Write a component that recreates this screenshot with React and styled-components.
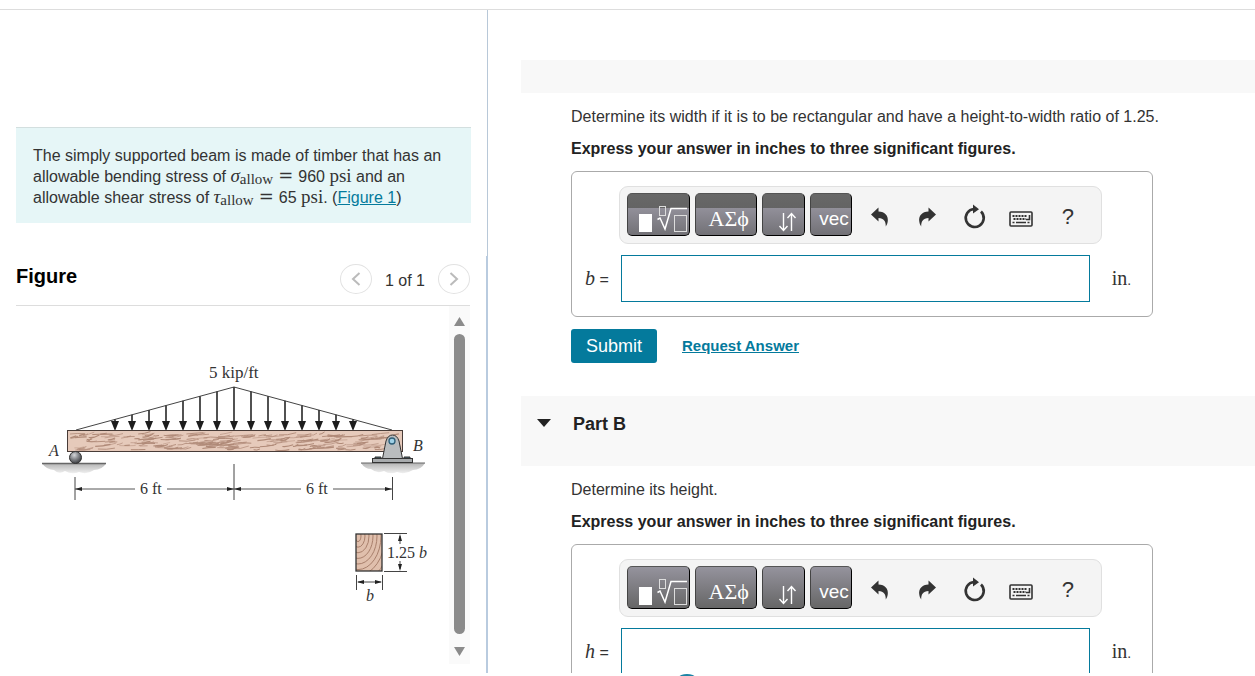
import React from "react";
import styled, { createGlobalStyle, css } from "styled-components";

// Small seeded generator so the wood grain is the same on every render
function makeGrain(count, width, height) {
  let seed = 4211;
  const next = () => {
    seed = (seed * 16807) % 2147483647;
    return seed / 2147483647;
  };
  const strokes = [];
  for (let i = 0; i < count; i++) {
    const len = 5 + next() * 13;
    const x = next() * (width - len);
    const y = 3 + next() * (height - 4);
    const rise = -next() * 2.5;
    const bend = next() * 3 - 1.5;
    strokes.push({
      d: `M${x.toFixed(1)} ${y.toFixed(1)}q${(len / 2).toFixed(1)} ${bend.toFixed(1)} ${len.toFixed(1)} ${rise.toFixed(1)}`,
      w: (0.5 + next() * 0.8).toFixed(1),
    });
  }
  return strokes;
}

const grain = makeGrain(230, 334, 20);

const loads = [-119, -102, -85, -68, -51, -34, -17, 0, 17, 34, 51, 68, 85, 102, 119];

function Dimension({ x1, x2, y, from, to }) {
  return (
    <g stroke="#555" fill="#222" strokeWidth="1">
      <path d={`M${x1} ${y}H${from}M${to} ${y}H${x2}`} fill="none" />
      <path d={`M${x1} ${y}l7 -2v4zM${x2} ${y}l-7 -2v4z`} stroke="none" />
    </g>
  );
}

function BeamFigure() {
  return (
    <Drawing viewBox="16 306 433 356" role="img" aria-label="Simply supported beam with triangular load">
      <defs>
        <radialGradient id="ball" cx="0.4" cy="0.3" r="0.7">
          <stop offset="0" stopColor="#d5d7da" />
          <stop offset="0.5" stopColor="#85878b" />
          <stop offset="1" stopColor="#3c3e42" />
        </radialGradient>
        <linearGradient id="soil" x1="0" y1="0" x2="0" y2="1">
          <stop offset="0" stopColor="#b5b5b5" />
          <stop offset="1" stopColor="#f0f0f0" />
        </linearGradient>
        <clipPath id="section">
          <rect x="356" y="534" width="26" height="37" />
        </clipPath>
      </defs>

      <text x="209" y="378" fontSize="17">5 kip/ft</text>
      <path d="M76 430L234 387L392 430" fill="none" stroke="#444" />
      {loads.map((dx) => {
        const x = 234 + dx;
        const top = 387 + Math.abs(dx) * 0.272;
        return (
          <g key={dx}>
            <path d={`M${x} ${top}V424`} stroke="#333" strokeWidth="1.7" />
            <path d={`M${x - 4} 421h8l-4 10z`} fill="#1d1d1d" />
          </g>
        );
      })}

      <rect x="67.5" y="430.5" width="335" height="21" fill="#e6cabb" />
      <g transform="translate(68 431)" fill="none" stroke="#b08a78">
        {grain.map((s, i) => (
          <path key={i} d={s.d} strokeWidth={s.w} />
        ))}
      </g>
      <rect x="67.5" y="430.5" width="335" height="21" fill="none" stroke="#483c38" />

      <path d="M42 463.5H106Q102 470 94 470Q87 475 79 472Q72 475 65 471Q59 475 54 470Q47 470 42 463.5Z" fill="url(#soil)" />
      <path d="M42 463.5H106" stroke="#666" strokeWidth="1.5" />
      <circle cx="75.5" cy="457.5" r="6" fill="url(#ball)" stroke="#333" />

      <path d="M361 463H425Q421 470 413 470Q405 475 397 472Q390 475 384 471Q377 474 371 469Q365 469 361 463Z" fill="url(#soil)" />
      <path d="M361 463H425" stroke="#666" />
      <path d="M375 459v-2h6v2zM404 459v-2h6v2z" fill="#42606a" stroke="#333" />
      <rect x="372.5" y="458.5" width="40" height="4" fill="#a8abad" stroke="#333" />
      <path d="M382.5 458.5L386 441Q388 435 392.5 435Q397 435 399 441L402.5 458.5Z" fill="#b9bcbe" stroke="#333" />
      <circle cx="392" cy="441" r="3" fill="#9ed0e6" stroke="#2d5f79" strokeWidth="1.3" />

      <text x="49" y="456" fontSize="16" fontStyle="italic">A</text>
      <text x="413" y="451" fontSize="16" fontStyle="italic">B</text>

      <path d="M75 477V500M234 464V500M392.5 477V500" stroke="#444" fill="none" />
      <Dimension x1={75} x2={234} y={489} from={135} to={167} />
      <Dimension x1={234} x2={392} y={489} from={301} to={333} />
      <text x="140" y="494" fontSize="16">6 ft</text>
      <text x="306" y="494" fontSize="16">6 ft</text>

      <rect x="356" y="534" width="26" height="37" fill="#e0bfac" />
      <g clipPath="url(#section)" fill="none" stroke="#a9806c">
        {[4, 8, 12, 16, 20, 24, 28, 33].map((r) => (
          <ellipse key={r} cx="358" cy="536" rx={r - 1} ry={r * 1.4} />
        ))}
      </g>
      <rect x="356" y="534" width="26" height="37" fill="none" stroke="#333" strokeWidth="1.3" />
      <path d="M384 533.5H407M384 571.5H407M400 536V544M400 561V569M356.5 575V590M382.5 575V590M358 582H381" stroke="#444" fill="none" />
      <path d="M400 534l-2 7h4zM400 571l-2 -7h4zM357 582l7 -2v4zM382 582l-7 -2v4z" fill="#222" />
      <text x="387" y="558" fontSize="16">
        1.25 <tspan fontStyle="italic">b</tspan>
      </text>
      <text x="366" y="601" fontSize="16" fontStyle="italic">b</text>
    </Drawing>
  );
}

function TemplatesIcon() {
  return (
    <svg width="61" height="41" viewBox="0 0 61 41" fill="none" stroke="#fff">
      <rect x="11" y="20" width="13" height="18" fill="#fff" stroke="none" />
      <rect x="31.5" y="12.5" width="6" height="9" stroke="#ddd" />
      <path d="M29.5 25.5l2.5 -1.5l5 11l6 -20.5H59" strokeWidth="1.5" />
      <rect x="46.5" y="21.5" width="12" height="16" stroke="#ddd" />
    </svg>
  );
}

function ArrowsIcon() {
  return (
    <svg width="41" height="41" viewBox="0 0 41 41" fill="none" stroke="#fff" strokeWidth="1.4">
      <path d="M20.5 19V36M16.5 32l4 4.5l4 -4.5M28.5 37V19.5M24.5 24l4 -4.5l4 4.5" />
    </svg>
  );
}

function UndoIcon() {
  return (
    <svg width="20" height="22" viewBox="0 0 20 22" fill="#333">
      <path d="M1 8.5L8.5 1.5V5.5C15 5.5 18.5 10 17.8 15C17.5 17.5 16.8 19 15.8 20.5C15.8 15 14 12.5 8.5 12V15.5Z" />
    </svg>
  );
}

function RedoIcon() {
  return (
    <svg width="20" height="22" viewBox="0 0 20 22" fill="#333">
      <path d="M19 8.5L11.5 1.5V5.5C5 5.5 1.5 10 2.2 15C2.5 17.5 3.2 19 4.2 20.5C4.2 15 6 12.5 11.5 12V15.5Z" />
    </svg>
  );
}

function ResetIcon() {
  return (
    <svg width="24" height="26" viewBox="0 0 24 26">
      <path d="M19 7.5A9 9 0 1 1 12 5" fill="none" stroke="#333" strokeWidth="2.6" />
      <path d="M11 0.5L17 5.2L11 9.5Z" fill="#333" />
    </svg>
  );
}

function KeyboardIcon() {
  return (
    <svg width="24" height="20" viewBox="0 -4 24 20" fill="none" stroke="#333">
      <rect x="1" y="1" width="22" height="14" rx="1" strokeWidth="1.6" />
      <path d="M3.5 5H18M4.5 8H17" strokeWidth="2" strokeDasharray="2 1" />
      <path d="M20.5 4V8.5H17M3.5 11.5H5.5M7 11.5H17M18.5 11.5H20.5" strokeWidth="1.6" />
    </svg>
  );
}

function AnswerBox({ id, symbol, striped }) {
  return (
    <AnswerFrame>
      <Toolbar>
        <ToolButton $width={63} $striped={striped} aria-label="Templates">
          <TemplatesIcon />
        </ToolButton>
        <GreekButton $width={62} $striped={striped}>ΑΣϕ</GreekButton>
        <ToolButton $width={43} $striped={striped} aria-label="Subscript and superscript">
          <ArrowsIcon />
        </ToolButton>
        <TextButton $width={42} $striped={striped}>vec</TextButton>
        <IconGroup>
          <IconButton aria-label="Undo"><UndoIcon /></IconButton>
          <IconButton aria-label="Redo"><RedoIcon /></IconButton>
          <IconButton aria-label="Reset"><ResetIcon /></IconButton>
          <IconButton aria-label="Keyboard shortcuts"><KeyboardIcon /></IconButton>
          <IconButton aria-label="Help">?</IconButton>
        </IconGroup>
      </Toolbar>
      <Label htmlFor={id}>
        <i>{symbol}</i> =
      </Label>
      <AnswerInput id={id} type="text" />
      <Unit>
        in<span>.</span>
      </Unit>
    </AnswerFrame>
  );
}

export default function App() {
  return (
    <>
      <GlobalStyles />
      <Page>
        <Sidebar>
          <Intro>
            <Problem>
              The simply supported beam is made of timber that has an allowable bending stress of{" "}
              <Variable>
                <i>σ</i>
                <sub>allow</sub>
              </Variable>
              <Equals>=</Equals>960 <MathText>psi</MathText> and an allowable shear stress of{" "}
              <Variable>
                <i>τ</i>
                <sub>allow</sub>
              </Variable>
              <Equals>=</Equals>65 <MathText>psi</MathText>. (<Link href="#figure">Figure 1</Link>)
            </Problem>
          </Intro>
          <FigurePanel id="figure">
            <FigureHeader>
              <FigureTitle>Figure</FigureTitle>
              <Pager>
                <PagerButton aria-label="Previous figure">
                  <svg width="10" height="14" viewBox="0 0 10 14" fill="none" stroke="#bbb" strokeWidth="2">
                    <path d="M8.5 1L2 7L8.5 13" />
                  </svg>
                </PagerButton>
                <PagerCount>1 of 1</PagerCount>
                <PagerButton aria-label="Next figure">
                  <svg width="10" height="14" viewBox="0 0 10 14" fill="none" stroke="#bbb" strokeWidth="2">
                    <path d="M1.5 1L8 7L1.5 13" />
                  </svg>
                </PagerButton>
              </Pager>
            </FigureHeader>
            <FigureBody>
              <BeamFigure />
              <ScrollTrack>
                <ScrollArrow viewBox="0 0 11 9">
                  <path d="M5.5 0L11 9H0Z" />
                </ScrollArrow>
                <ScrollThumb />
                <ScrollArrow viewBox="0 0 11 9">
                  <path d="M5.5 9L11 0H0Z" />
                </ScrollArrow>
              </ScrollTrack>
            </FigureBody>
          </FigurePanel>
        </Sidebar>

        <Main>
          <PartBar />
          <Part>
            <p>Determine its width if it is to be rectangular and have a height-to-width ratio of 1.25.</p>
            <strong>Express your answer in inches to three significant figures.</strong>
            <AnswerBox id="answer-b" symbol="b" striped />
            <Actions>
              <Submit>Submit</Submit>
              <RequestLink href="#request">Request Answer</RequestLink>
            </Actions>
          </Part>
          <PartBar $titled>
            <svg width="14" height="8" viewBox="0 0 14 8" fill="#222">
              <path d="M0 0H14L7 8Z" />
            </svg>
            <PartTitle>Part B</PartTitle>
          </PartBar>
          <Part>
            <p>Determine its height.</p>
            <strong>Express your answer in inches to three significant figures.</strong>
            <AnswerBox id="answer-h" symbol="h" />
          </Part>
        </Main>
      </Page>
      <Bubble />
    </>
  );
}

const GlobalStyles = createGlobalStyle`
  * {
    box-sizing: border-box;
  }
  body {
    margin: 0;
    background: #fff;
    color: #333;
    font-family: "Liberation Sans", Arial, sans-serif;
    font-size: 16px;
    line-height: 20px;
  }
  p, h2, h3 {
    margin: 0;
  }
  button {
    padding: 0;
    font-family: inherit;
    cursor: pointer;
  }
`;

const serif = css`
  font-family: "Liberation Serif", "Times New Roman", serif;
`;

const Page = styled.div`
  display: grid;
  grid-template-columns: 488px minmax(0, 1fr);
  height: calc(100vh - 12px);
  margin-top: 9px;
  border-top: 1px solid #ddd;
  overflow: hidden;
`;

const Sidebar = styled.aside`
  display: flex;
  flex-direction: column;
  min-height: 0;
`;

const Intro = styled.section`
  padding: 117px 16px 33px;
  border-right: 1px solid #b8c8d8;
`;

const Problem = styled.p`
  padding: 17px 16px 15px 17px;
  border-top: 1px solid #d3dfdf;
  background: #e6f6f7;
  line-height: 21px;
`;

const MathText = styled.span`
  ${serif}
  font-size: 19px;
  line-height: 0;
`;

const Variable = styled(MathText)`
  sub {
    font-size: 15px;
    line-height: 0;
    vertical-align: -2px;
  }
`;

const Equals = styled.span`
  margin: 0 5px;
  font-family: "DejaVu Serif", serif;
  font-size: 18px;
  line-height: 0;
`;

const Link = styled.a`
  color: #047a9c;
  text-decoration: underline;
`;

const FigurePanel = styled.section`
  flex: 1;
  padding: 0 16px;
  border-right: 2px solid #b9cbdf;
`;

const FigureHeader = styled.header`
  display: flex;
  justify-content: space-between;
  padding: 8px 0 11px;
  border-bottom: 1px solid #ddd;
`;

const FigureTitle = styled.h2`
  color: #000;
  font-size: 20px;
  line-height: 24px;
`;

const Pager = styled.div`
  display: flex;
  gap: 13px;
`;

const PagerButton = styled.button`
  display: grid;
  place-items: center;
  width: 32px;
  height: 30px;
  border: 1px solid #e2e2e2;
  border-radius: 50%;
  background: #fff;
`;

const PagerCount = styled.span`
  height: 30px;
  line-height: 34px;
`;

const FigureBody = styled.div`
  display: flex;
`;

const Drawing = styled.svg`
  flex: 1;
  min-width: 0;
  height: 356px;
  fill: #333;
  ${serif}
`;

const ScrollTrack = styled.div`
  display: flex;
  flex-direction: column;
  align-items: center;
  justify-content: space-between;
  width: 21px;
  height: 358px;
  padding: 11px 0 8px;
  background: #fafafa;
`;

const ScrollArrow = styled.svg`
  width: 11px;
  height: 9px;
  fill: #8b8b8b;
`;

const ScrollThumb = styled.div`
  flex: 1;
  width: 11px;
  margin: 8px 0 13px;
  border-radius: 6px;
  background: #8b8b8b;
`;

const Main = styled.main`
  min-width: 0;
  padding: 50px 0 0 33px;
`;

const PartBar = styled.header`
  display: flex;
  gap: 22px;
  height: ${(props) => (props.$titled ? "70px" : "33px")};
  padding: 16px;
  background: #f8f8f8;

  svg {
    margin-top: 7px;
  }
`;

const PartTitle = styled.h3`
  color: #222;
  font-size: 18px;
  line-height: 24px;
`;

const Part = styled.section`
  display: flex;
  flex-direction: column;
  align-items: flex-start;
  gap: 12px;
  padding: 14px 0 33px 50px;

  strong {
    color: #222;
  }
`;

const AnswerFrame = styled.div`
  display: grid;
  grid-template-columns: auto 469px auto;
  align-items: center;
  column-gap: 12px;
  row-gap: 11px;
  padding: 14px 21px 14px 13px;
  border: 1px solid #aaa;
  border-radius: 6px;
`;

const Toolbar = styled.div`
  grid-column: 2 / 4;
  display: flex;
  gap: 5px;
  width: 483px;
  height: 58px;
  margin-left: -2px;
  padding: 6px 7px;
  border: 1px solid #e0e0e0;
  border-radius: 9px;
  background: #f4f4f4;
`;

const ToolButton = styled.button`
  display: flex;
  align-items: center;
  justify-content: flex-end;
  width: ${(props) => props.$width}px;
  height: 43px;
  border: 1px solid #000;
  border-top-color: #555;
  border-left-color: #444;
  border-radius: 5px;
  overflow: hidden;
  color: #fff;
  background: ${(props) =>
    props.$striped
      ? "linear-gradient(#686868 0, #646464 14px, #92909a 14px, #727176 100%)"
      : "linear-gradient(#95939d, #666)"};
`;

const GreekButton = styled(ToolButton)`
  ${serif}
  padding: 8px 7px 0 0;
  font-size: 22px;
`;

const TextButton = styled(ToolButton)`
  padding: 8px 2px 0 0;
  font-size: 19px;
`;

const IconGroup = styled.div`
  display: flex;
  gap: 5px;
  margin-left: 2px;
`;

const IconButton = styled.button`
  display: grid;
  place-items: center;
  width: 42px;
  height: 48px;
  border: 0;
  background: none;
  color: #333;
  font-size: 22px;
`;

const Label = styled.label`
  color: #333;
  white-space: nowrap;

  i {
    ${serif}
    font-size: 20px;
  }
`;

const AnswerInput = styled.input`
  width: 100%;
  height: 47px;
  padding: 0 8px;
  border: 1px solid #047a9c;
  border-radius: 0;
  outline: none;
  background: #fff;
  font-size: 18px;
`;

const Unit = styled.span`
  ${serif}
  margin-left: 10px;
  font-size: 20px;

  span {
    font-family: "Liberation Sans", Arial, sans-serif;
    font-size: 14px;
  }
`;

const Actions = styled.div`
  display: flex;
  align-items: center;
  gap: 25px;
`;

const Submit = styled.button`
  width: 86px;
  height: 34px;
  border: 0;
  border-radius: 3px;
  background: #047a9c;
  color: #fff;
  font-size: 18px;
`;

const RequestLink = styled.a`
  color: #047a9c;
  font-size: 15px;
  font-weight: 700;
  text-decoration: underline;
`;

// Peeks in from below the window edge
const Bubble = styled.div`
  position: fixed;
  bottom: -28px;
  left: 672px;
  width: 30px;
  height: 30px;
  border-radius: 50%;
  background: #1c84a5;
`;
